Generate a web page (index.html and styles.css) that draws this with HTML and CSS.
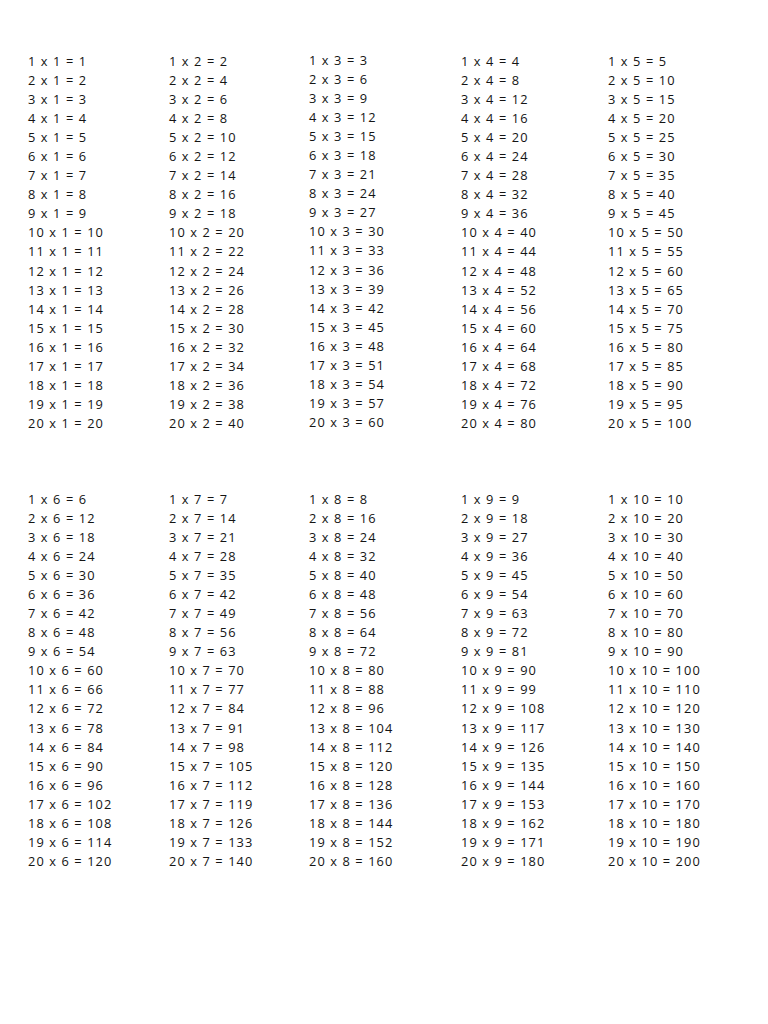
FILE: index.html
```html
<!DOCTYPE html>
<html lang="en">
<head>
<meta charset="utf-8">
<title>Multiplication tables</title>
<link rel="stylesheet" href="styles.css">
</head>
<body>
<main class="page">
<section class="block">
<div class="col">
<div>1 x 1 = 1</div><div>2 x 1 = 2</div><div>3 x 1 = 3</div><div>4 x 1 = 4</div><div>5 x 1 = 5</div><div>6 x 1 = 6</div><div>7 x 1 = 7</div><div>8 x 1 = 8</div><div>9 x 1 = 9</div><div>10 x 1 = 10</div><div>11 x 1 = 11</div><div>12 x 1 = 12</div><div>13 x 1 = 13</div><div>14 x 1 = 14</div><div>15 x 1 = 15</div><div>16 x 1 = 16</div><div>17 x 1 = 17</div><div>18 x 1 = 18</div><div>19 x 1 = 19</div><div>20 x 1 = 20</div>
</div>
<div class="col">
<div>1 x 2 = 2</div><div>2 x 2 = 4</div><div>3 x 2 = 6</div><div>4 x 2 = 8</div><div>5 x 2 = 10</div><div>6 x 2 = 12</div><div>7 x 2 = 14</div><div>8 x 2 = 16</div><div>9 x 2 = 18</div><div>10 x 2 = 20</div><div>11 x 2 = 22</div><div>12 x 2 = 24</div><div>13 x 2 = 26</div><div>14 x 2 = 28</div><div>15 x 2 = 30</div><div>16 x 2 = 32</div><div>17 x 2 = 34</div><div>18 x 2 = 36</div><div>19 x 2 = 38</div><div>20 x 2 = 40</div>
</div>
<div class="col col-up">
<div>1 x 3 = 3</div><div>2 x 3 = 6</div><div>3 x 3 = 9</div><div>4 x 3 = 12</div><div>5 x 3 = 15</div><div>6 x 3 = 18</div><div>7 x 3 = 21</div><div>8 x 3 = 24</div><div>9 x 3 = 27</div><div>10 x 3 = 30</div><div>11 x 3 = 33</div><div>12 x 3 = 36</div><div>13 x 3 = 39</div><div>14 x 3 = 42</div><div>15 x 3 = 45</div><div>16 x 3 = 48</div><div>17 x 3 = 51</div><div>18 x 3 = 54</div><div>19 x 3 = 57</div><div>20 x 3 = 60</div>
</div>
<div class="col">
<div>1 x 4 = 4</div><div>2 x 4 = 8</div><div>3 x 4 = 12</div><div>4 x 4 = 16</div><div>5 x 4 = 20</div><div>6 x 4 = 24</div><div>7 x 4 = 28</div><div>8 x 4 = 32</div><div>9 x 4 = 36</div><div>10 x 4 = 40</div><div>11 x 4 = 44</div><div>12 x 4 = 48</div><div>13 x 4 = 52</div><div>14 x 4 = 56</div><div>15 x 4 = 60</div><div>16 x 4 = 64</div><div>17 x 4 = 68</div><div>18 x 4 = 72</div><div>19 x 4 = 76</div><div>20 x 4 = 80</div>
</div>
<div class="col">
<div>1 x 5 = 5</div><div>2 x 5 = 10</div><div>3 x 5 = 15</div><div>4 x 5 = 20</div><div>5 x 5 = 25</div><div>6 x 5 = 30</div><div>7 x 5 = 35</div><div>8 x 5 = 40</div><div>9 x 5 = 45</div><div>10 x 5 = 50</div><div>11 x 5 = 55</div><div>12 x 5 = 60</div><div>13 x 5 = 65</div><div>14 x 5 = 70</div><div>15 x 5 = 75</div><div>16 x 5 = 80</div><div>17 x 5 = 85</div><div>18 x 5 = 90</div><div>19 x 5 = 95</div><div>20 x 5 = 100</div>
</div>
</section>
<section class="block">
<div class="col">
<div>1 x 6 = 6</div><div>2 x 6 = 12</div><div>3 x 6 = 18</div><div>4 x 6 = 24</div><div>5 x 6 = 30</div><div>6 x 6 = 36</div><div>7 x 6 = 42</div><div>8 x 6 = 48</div><div>9 x 6 = 54</div><div>10 x 6 = 60</div><div>11 x 6 = 66</div><div>12 x 6 = 72</div><div>13 x 6 = 78</div><div>14 x 6 = 84</div><div>15 x 6 = 90</div><div>16 x 6 = 96</div><div>17 x 6 = 102</div><div>18 x 6 = 108</div><div>19 x 6 = 114</div><div>20 x 6 = 120</div>
</div>
<div class="col">
<div>1 x 7 = 7</div><div>2 x 7 = 14</div><div>3 x 7 = 21</div><div>4 x 7 = 28</div><div>5 x 7 = 35</div><div>6 x 7 = 42</div><div>7 x 7 = 49</div><div>8 x 7 = 56</div><div>9 x 7 = 63</div><div>10 x 7 = 70</div><div>11 x 7 = 77</div><div>12 x 7 = 84</div><div>13 x 7 = 91</div><div>14 x 7 = 98</div><div>15 x 7 = 105</div><div>16 x 7 = 112</div><div>17 x 7 = 119</div><div>18 x 7 = 126</div><div>19 x 7 = 133</div><div>20 x 7 = 140</div>
</div>
<div class="col">
<div>1 x 8 = 8</div><div>2 x 8 = 16</div><div>3 x 8 = 24</div><div>4 x 8 = 32</div><div>5 x 8 = 40</div><div>6 x 8 = 48</div><div>7 x 8 = 56</div><div>8 x 8 = 64</div><div>9 x 8 = 72</div><div>10 x 8 = 80</div><div>11 x 8 = 88</div><div>12 x 8 = 96</div><div>13 x 8 = 104</div><div>14 x 8 = 112</div><div>15 x 8 = 120</div><div>16 x 8 = 128</div><div>17 x 8 = 136</div><div>18 x 8 = 144</div><div>19 x 8 = 152</div><div>20 x 8 = 160</div>
</div>
<div class="col">
<div>1 x 9 = 9</div><div>2 x 9 = 18</div><div>3 x 9 = 27</div><div>4 x 9 = 36</div><div>5 x 9 = 45</div><div>6 x 9 = 54</div><div>7 x 9 = 63</div><div>8 x 9 = 72</div><div>9 x 9 = 81</div><div>10 x 9 = 90</div><div>11 x 9 = 99</div><div>12 x 9 = 108</div><div>13 x 9 = 117</div><div>14 x 9 = 126</div><div>15 x 9 = 135</div><div>16 x 9 = 144</div><div>17 x 9 = 153</div><div>18 x 9 = 162</div><div>19 x 9 = 171</div><div>20 x 9 = 180</div>
</div>
<div class="col">
<div>1 x 10 = 10</div><div>2 x 10 = 20</div><div>3 x 10 = 30</div><div>4 x 10 = 40</div><div>5 x 10 = 50</div><div>6 x 10 = 60</div><div>7 x 10 = 70</div><div>8 x 10 = 80</div><div>9 x 10 = 90</div><div>10 x 10 = 100</div><div>11 x 10 = 110</div><div>12 x 10 = 120</div><div>13 x 10 = 130</div><div>14 x 10 = 140</div><div>15 x 10 = 150</div><div>16 x 10 = 160</div><div>17 x 10 = 170</div><div>18 x 10 = 180</div><div>19 x 10 = 190</div><div>20 x 10 = 200</div>
</div>
</section>
</main>
</body>
</html>
```
FILE: styles.css
```css
html, body {
  margin: 0;
  padding: 0;
  background: #ffffff;
}
.page {
  padding: 52px 0 0 28px;
  display: flex;
  flex-direction: column;
  gap: 57px;
  font-family: "Open Sans", "Liberation Sans", sans-serif;
  font-size: 12.8px;
  letter-spacing: 1.1px;
  line-height: 19.05px;
  color: #141414;
}
.block {
  display: grid;
  grid-template-columns: 141px 140px 152px 147px 150px;
}
.col {
  white-space: nowrap;
}
.col-up {
  margin-top: -1px;
}
```
